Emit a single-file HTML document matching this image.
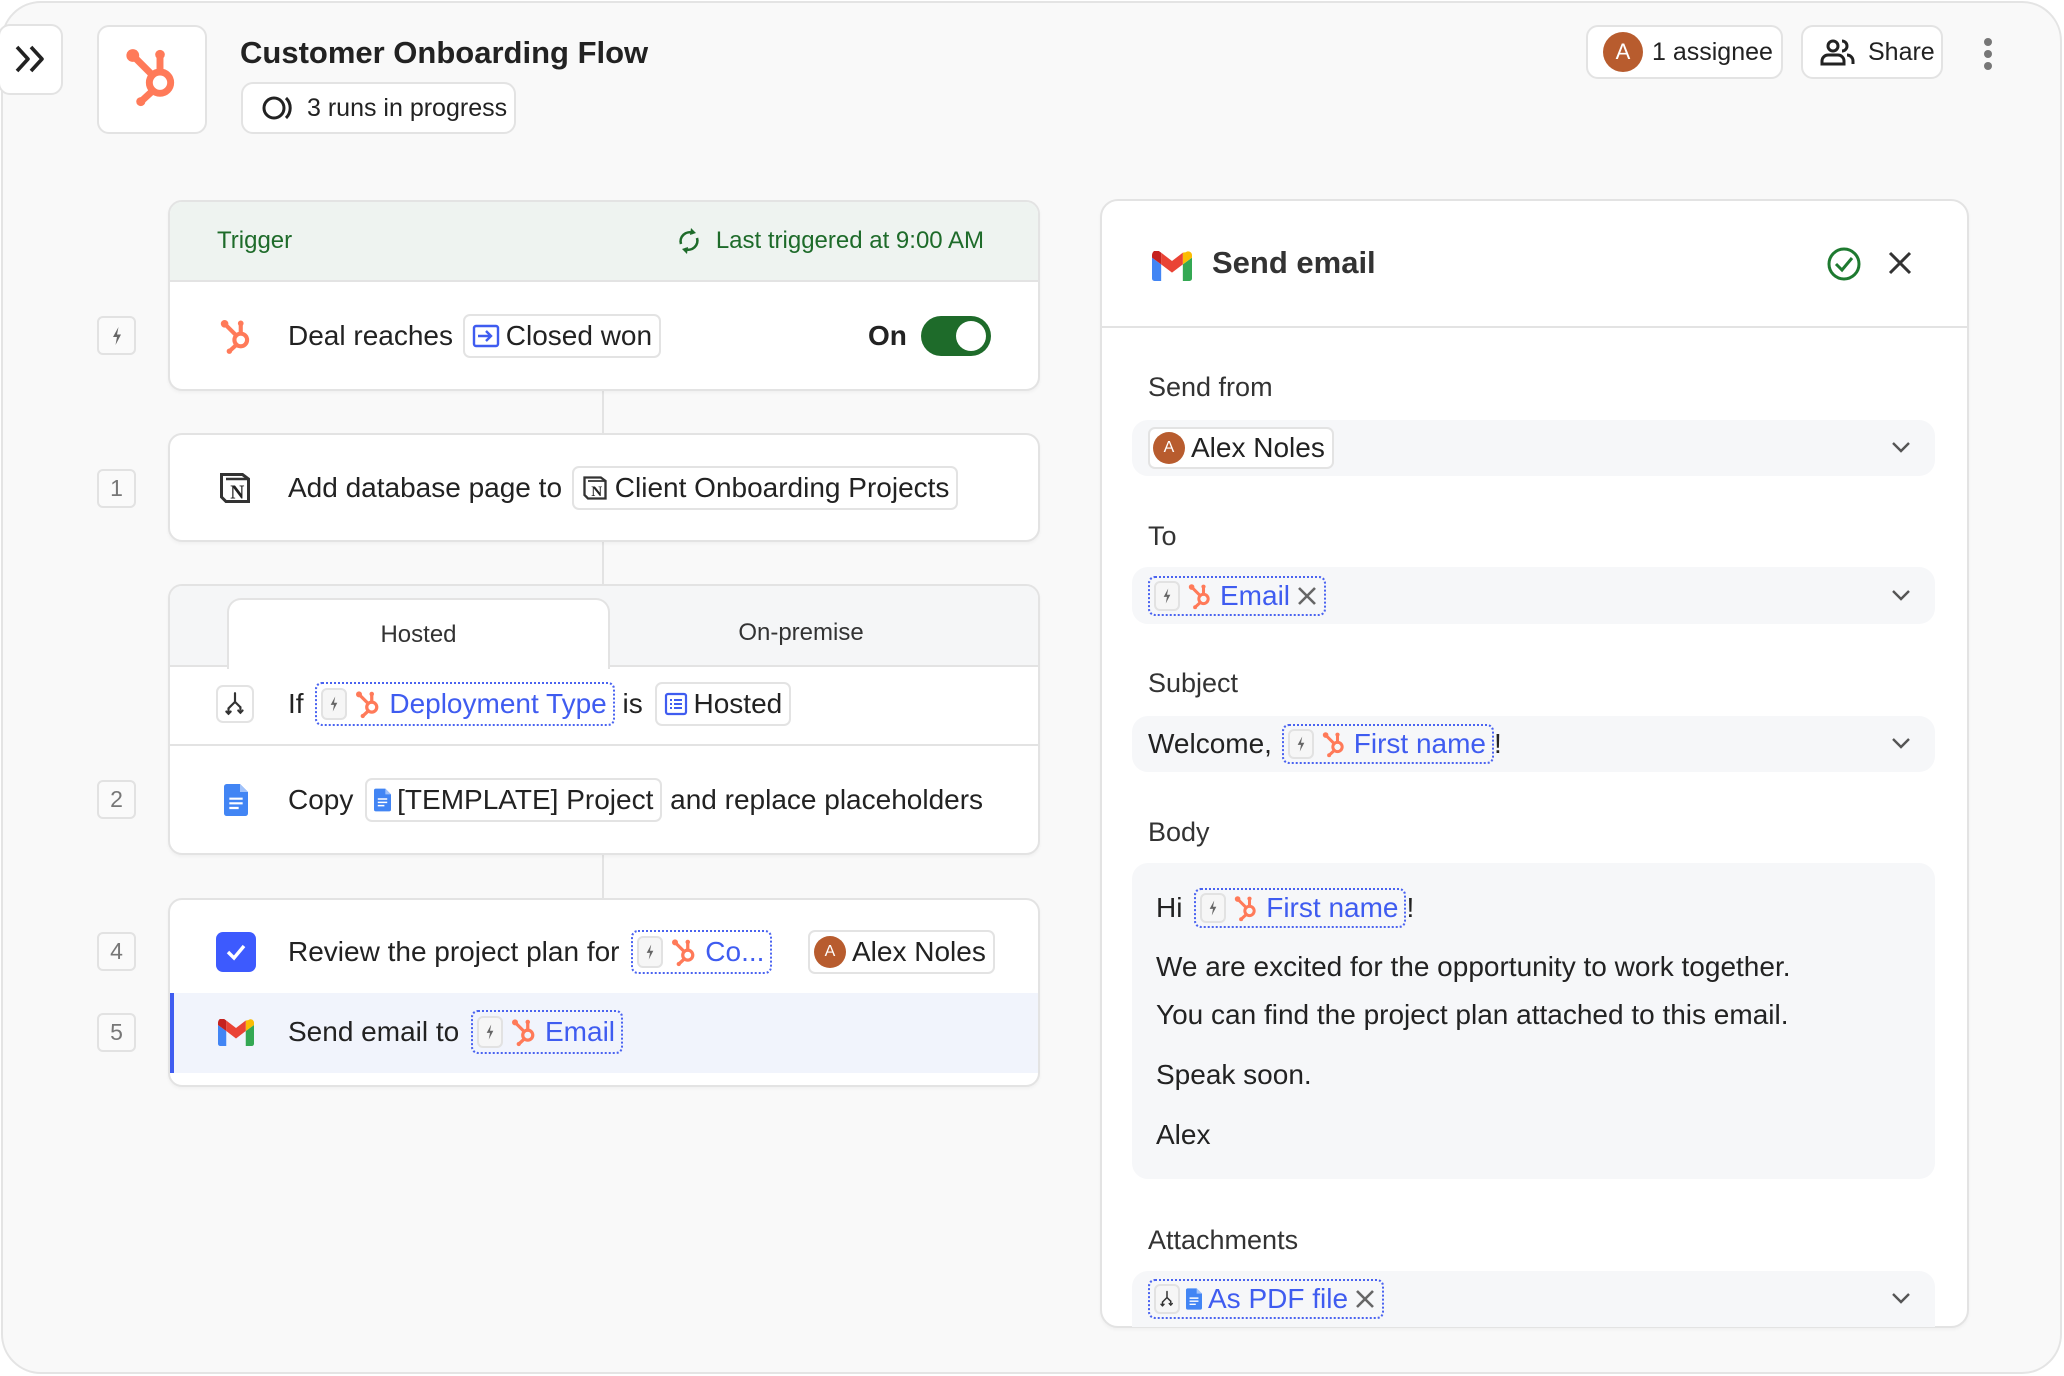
<!DOCTYPE html>
<html><head><meta charset="utf-8"><style>
*{box-sizing:border-box;margin:0;padding:0}
body{width:2064px;height:1376px;background:#fff;font-family:"Liberation Sans",sans-serif;color:#222;position:relative;overflow:hidden}
.frame{position:absolute;left:1px;top:1px;width:2061px;height:1373px;border:2px solid #e4e4e4;border-radius:40px;background:#f9f9f9}
.abs{position:absolute}
.row{position:absolute;display:flex;align-items:center;font-size:28px;white-space:nowrap}
.card{position:absolute;background:#fff;border:2px solid #e3e3e3;border-radius:14px;box-shadow:0 2px 3px rgba(0,0,0,.04)}
.num{position:absolute;left:97px;width:39px;height:39px;border:2px solid #e2e2e2;border-radius:6px;background:#fafafa;color:#777;font-size:23px;display:flex;align-items:center;justify-content:center}
.chip{display:inline-flex;align-items:center;gap:6px;border:2px solid #e3e3e3;border-radius:7px;padding:0 7px;height:44px;background:#fff}
.tok{display:inline-flex;align-items:center;gap:6px;border:2px dotted #4a63f0;border-radius:7px;padding:0 6px 0 4px;height:44px;color:#3f5cf0}
.bolt{display:inline-flex;align-items:center;justify-content:center;width:26px;height:32px;border:2px solid #e2e2e2;border-radius:6px;background:#f6f6f6}
.line{position:absolute;left:602px;width:2px;background:#e3e3e3}
.lbl{position:absolute;left:1148px;font-size:27px;color:#333}
.fld{position:absolute;left:1132px;width:803px;background:#f6f7f9;border-radius:16px;display:flex;align-items:center;padding:0 16px;font-size:28px;white-space:nowrap}
.chev{position:absolute;right:24px;top:50%;margin-top:-8px}
.btn{position:absolute;top:25px;height:54px;border:2px solid #e3e3e3;border-radius:12px;background:#fff;display:flex;align-items:center;font-size:25px;color:#222}
</style></head><body>
<svg width="0" height="0" style="position:absolute"><defs>
<symbol id="hs" viewBox="0 0 24 24"><g stroke="#ff7a59" stroke-width="2.6" fill="none" stroke-linecap="round"><circle cx="15" cy="14.5" r="4"/><line x1="12" y1="11.5" x2="6" y2="5.5"/><line x1="15" y1="10.5" x2="15" y2="5"/><line x1="12.3" y1="17.5" x2="8.5" y2="21"/></g><circle cx="4.8" cy="4.3" r="2.4" fill="#ff7a59"/><circle cx="15" cy="4" r="1.8" fill="#ff7a59"/><circle cx="7.8" cy="21.6" r="1.7" fill="#ff7a59"/></symbol>
<symbol id="bl" viewBox="0 0 12 20"><path d="M7.5 1 2 11h4l-1.5 8L10 8.5H6z" fill="#666"/></symbol>
<symbol id="gm" viewBox="0 0 48 36"><path d="M3 36h8V16L0 8v25a3 3 0 0 0 3 3z" fill="#4285f4"/><path d="M37 36h8a3 3 0 0 0 3-3V8l-11 8z" fill="#34a853"/><path d="M37 2v14l11-8V5c0-4-4.5-6-7.5-3.5z" fill="#fbbc04"/><path d="M11 16V2l13 10 13-10v14L24 26z" fill="#ea4335"/><path d="M0 5v3l11 8V2L7.5-.5C4.5-3 0 1 0 5z" fill="#c5221f"/></symbol>
<symbol id="doc" viewBox="0 0 18 24"><path d="M2 0h10l6 6v16a2 2 0 0 1-2 2H2a2 2 0 0 1-2-2V2a2 2 0 0 1 2-2z" fill="#4285f4"/><path d="M12 0v6h6z" fill="#a1c2fa"/><path d="M4 11h10M4 14.5h10M4 18h7" stroke="#fff" stroke-width="1.6"/></symbol>
<symbol id="br" viewBox="0 0 24 24"><g stroke="#333" stroke-width="2" fill="none" stroke-linecap="round"><path d="M12 2v8M12 10 6 16v5M12 10l5 5"/><path d="M4 19l2 2 2-2M15 18l2 2 2-2"/><path d="M17 15v5" stroke-dasharray="2 2"/></g></symbol>
<symbol id="cv" viewBox="0 0 20 12"><path d="M2 2l8 8 8-8" stroke="#555" stroke-width="2.4" fill="none"/></symbol>
<symbol id="nt" viewBox="0 0 24 24"><path d="M3 3h14l4 3v15H6l-3-3z" fill="#fff" stroke="#333" stroke-width="2"/><path d="M6 6h15" stroke="#333" stroke-width="1.6"/><text x="13.5" y="19" font-family="Liberation Serif" font-weight="bold" font-size="13" text-anchor="middle" fill="#222">N</text></symbol>
</defs></svg>
<div class="frame"></div>

<div class="abs" style="left:-2px;top:24px;width:65px;height:71px;border:2px solid #e3e3e3;border-radius:12px;background:#fff"></div>
<svg class="abs" style="left:14px;top:44px" width="34" height="30" viewBox="0 0 34 30"><path d="M3 3l11 12L3 27M17 3l11 12-11 12" stroke="#222" stroke-width="3.6" fill="none" stroke-linejoin="round"/></svg>
<div class="abs" style="left:97px;top:25px;width:110px;height:109px;border:2px solid #e3e3e3;border-radius:12px;background:#fff"></div>
<svg class="abs" style="left:120px;top:44px" width="64" height="64"><use href="#hs"/></svg>
<div class="abs" style="left:240px;top:35px;font-size:31px;font-weight:600;color:#222">Customer Onboarding Flow</div>
<div class="abs" style="left:241px;top:82px;width:275px;height:52px;border:2px solid #e3e3e3;border-radius:12px;background:#fff;display:flex;align-items:center;padding-left:18px;font-size:25px;color:#222">
<svg width="36" height="28" viewBox="0 0 36 28" style="margin-right:10px"><circle cx="13" cy="14" r="10" stroke="#222" stroke-width="3" fill="none"/><path d="M25 4a14 14 0 0 1 0 20" stroke="#222" stroke-width="3" fill="none"/></svg>3 runs in progress</div>
<div class="btn" style="left:1586px;width:197px;padding-left:15px"><span style="width:40px;height:40px;border-radius:50%;background:#b85c2e;color:#fff;display:flex;align-items:center;justify-content:center;font-size:22px;margin-right:9px">A</span>1 assignee</div>
<div class="btn" style="left:1801px;width:142px;padding-left:17px"><svg width="36" height="28" viewBox="0 0 36 28" style="margin-right:12px"><g stroke="#222" stroke-width="3" fill="none"><circle cx="13" cy="8" r="5"/><path d="M2 26v-3a6 6 0 0 1 6-6h10a6 6 0 0 1 6 6v3z"/><path d="M22 3a5 5 0 0 1 0 10M27 17a6 6 0 0 1 6 6v3"/></g></svg>Share</div>
<div class="abs" style="left:1984px;top:38px;width:10px"><div style="width:8px;height:8px;border-radius:50%;background:#777;margin-bottom:4px"></div><div style="width:8px;height:8px;border-radius:50%;background:#777;margin-bottom:4px"></div><div style="width:8px;height:8px;border-radius:50%;background:#777"></div></div>

<div class="line" style="top:390px;height:44px"></div>
<div class="line" style="top:541px;height:44px"></div>
<div class="line" style="top:854px;height:45px"></div>

<div class="card" style="left:168px;top:200px;width:872px;height:191px;overflow:hidden">
<div style="height:80px;background:#eef3f0;border-bottom:2px solid #e3e3e3;display:flex;align-items:center;padding:0 54px 0 47px;color:#1e6b2a;font-size:24px">
<span>Trigger</span><span style="margin-left:auto;display:flex;align-items:center"><svg width="26" height="30" viewBox="0 0 26 30" style="margin-right:14px"><g stroke="#1e6b2a" stroke-width="2.6" fill="none"><path d="M5 18a9 9 0 0 1 12-11"/><path d="M21 12a9 9 0 0 1-12 11"/></g><path d="M15 2l5 5-6 2z M11 28l-5-5 6-2z" fill="#1e6b2a"/></svg>Last triggered at 9:00 AM</span></div>
</div>
<div class="num" style="top:316px"><svg width="12" height="22"><use href="#bl"/></svg></div>
<div class="row" style="left:217px;top:314px;height:44px"><svg width="38" height="38" style="margin-right:33px"><use href="#hs"/></svg>Deal reaches&nbsp;<span class="chip" style="margin-left:2px"><svg width="28" height="24" viewBox="0 0 28 24"><rect x="2" y="2" width="24" height="20" rx="2" stroke="#3f5cf0" stroke-width="2.4" fill="none"/><path d="M6 12h12M14 7l5 5-5 5" stroke="#3f5cf0" stroke-width="2.4" fill="none"/></svg>Closed won</span></div>
<div class="row" style="left:868px;top:314px;height:44px;font-weight:600;color:#222">On</div>
<div class="abs" style="left:921px;top:316px;width:70px;height:40px;border-radius:20px;background:#1e6b2a"><div style="position:absolute;right:5px;top:5px;width:30px;height:30px;border-radius:50%;background:#fff"></div></div>

<div class="card" style="left:168px;top:433px;width:872px;height:109px"></div>
<div class="num" style="top:469px">1</div>
<div class="row" style="left:217px;top:466px;height:44px"><svg width="36" height="36" style="margin-right:35px"><use href="#nt"/></svg>Add database page to&nbsp;<span class="chip" style="margin-left:2px"><svg width="28" height="28"><use href="#nt"/></svg>Client Onboarding Projects</span></div>

<div class="card" style="left:168px;top:584px;width:872px;height:271px;overflow:hidden;background:#fff">
<div style="height:81px;background:#f5f6f7;border-bottom:2px solid #e3e3e3;position:relative">
<div style="position:absolute;left:57px;top:12px;width:383px;height:71px;background:#fff;border:2px solid #e3e3e3;border-bottom:none;border-radius:14px 14px 0 0;display:flex;align-items:center;justify-content:center;font-size:24px;color:#333">Hosted</div>
<div style="position:absolute;left:440px;top:12px;width:382px;height:69px;display:flex;align-items:center;justify-content:center;font-size:24px;color:#333">On-premise</div>
</div>
<div style="height:79px;border-bottom:2px solid #e3e3e3"></div>
</div>
<div class="row" style="left:216px;top:682px;height:44px"><span style="width:38px;height:38px;border:2px solid #e3e3e3;border-radius:7px;display:inline-flex;align-items:center;justify-content:center;margin-right:34px"><svg width="26" height="26"><use href="#br"/></svg></span>If&nbsp;<span class="tok" style="margin-left:4px"><span class="bolt"><svg width="10" height="18"><use href="#bl"/></svg></span><svg width="30" height="30"><use href="#hs"/></svg>Deployment Type</span>&nbsp;is&nbsp;<span class="chip" style="margin-left:4px"><svg width="24" height="24" viewBox="0 0 24 24"><rect x="2" y="2" width="20" height="20" rx="2" stroke="#3f5cf0" stroke-width="2.2" fill="none"/><path d="M6 8h2M10 8h8M6 12h2M10 12h8M6 16h2M10 16h8" stroke="#3f5cf0" stroke-width="2"/></svg>Hosted</span></div>
<div class="num" style="top:780px">2</div>
<div class="row" style="left:224px;top:777px;height:46px"><svg width="24" height="32" style="margin-right:40px"><use href="#doc"/></svg>Copy&nbsp;<span class="chip" style="margin-left:4px"><svg width="17" height="24"><use href="#doc"/></svg>[TEMPLATE] Project</span>&nbsp;and replace placeholders</div>

<div class="card" style="left:168px;top:898px;width:872px;height:189px;overflow:hidden">
<div style="position:absolute;left:0;top:93px;width:870px;height:80px;background:#f1f4fc;border-left:4px solid #3f5cf0"></div>
</div>
<div class="num" style="top:932px">4</div>
<div class="num" style="top:1013px">5</div>
<div class="row" style="left:216px;top:929px;height:46px"><span style="width:40px;height:40px;border-radius:7px;background:#3d5afe;display:inline-flex;align-items:center;justify-content:center;margin-right:32px"><svg width="22" height="18" viewBox="0 0 22 18"><path d="M3 9l6 6 10-12" stroke="#fff" stroke-width="3.4" fill="none"/></svg></span>Review the project plan for&nbsp;<span class="tok" style="margin-left:4px"><span class="bolt"><svg width="10" height="18"><use href="#bl"/></svg></span><svg width="30" height="30"><use href="#hs"/></svg>Co...</span></div>
<div class="row" style="left:808px;top:929px;height:46px"><span class="chip" style="padding-left:4px"><span style="width:32px;height:32px;border-radius:50%;background:#b85c2e;color:#fff;font-size:16px;display:inline-flex;align-items:center;justify-content:center">A</span>Alex Noles</span></div>
<div class="row" style="left:218px;top:1010px;height:44px"><svg width="36" height="27" style="margin-right:34px"><use href="#gm"/></svg>Send email to&nbsp;<span class="tok" style="margin-left:4px"><span class="bolt"><svg width="10" height="18"><use href="#bl"/></svg></span><svg width="30" height="30"><use href="#hs"/></svg>Email</span></div>

<div class="card" style="left:1100px;top:199px;width:869px;height:1129px;border-radius:18px;overflow:hidden">
<div style="height:127px;border-bottom:2px solid #e3e3e3"></div>
</div>
<svg class="abs" style="left:1152px;top:251px" width="40" height="30"><use href="#gm"/></svg>
<div class="abs" style="left:1212px;top:245px;font-size:31px;font-weight:600;color:#333">Send email</div>
<svg class="abs" style="left:1826px;top:246px" width="36" height="36" viewBox="0 0 36 36"><circle cx="18" cy="18" r="15" stroke="#1e7a30" stroke-width="3" fill="none"/><path d="M10 18l6 6 10-12" stroke="#1e7a30" stroke-width="3" fill="none"/></svg>
<svg class="abs" style="left:1887px;top:250px" width="26" height="26" viewBox="0 0 26 26"><path d="M3 3l20 20M23 3L3 23" stroke="#333" stroke-width="3"/></svg>

<div class="lbl" style="top:372px">Send from</div>
<div class="fld" style="top:420px;height:56px"><span class="chip" style="padding-left:3px;height:42px"><span style="width:32px;height:32px;border-radius:50%;background:#b85c2e;color:#fff;font-size:16px;display:inline-flex;align-items:center;justify-content:center">A</span>Alex Noles</span><svg class="chev" width="20" height="14"><use href="#cv"/></svg></div>
<div class="lbl" style="top:521px">To</div>
<div class="fld" style="top:567px;height:57px"><span class="tok" style="height:40px"><span class="bolt" style="height:30px"><svg width="10" height="18"><use href="#bl"/></svg></span><svg width="28" height="28"><use href="#hs"/></svg>Email<svg width="22" height="22" viewBox="0 0 22 22"><path d="M3 3l16 16M19 3L3 19" stroke="#666" stroke-width="2.6"/></svg></span><svg class="chev" width="20" height="14"><use href="#cv"/></svg></div>
<div class="lbl" style="top:668px">Subject</div>
<div class="fld" style="top:716px;height:56px">Welcome,&nbsp;<span class="tok" style="height:40px;margin-left:2px"><span class="bolt" style="height:30px"><svg width="10" height="18"><use href="#bl"/></svg></span><svg width="28" height="28"><use href="#hs"/></svg>First name</span>!<svg class="chev" width="20" height="14"><use href="#cv"/></svg></div>
<div class="lbl" style="top:817px">Body</div>
<div class="abs" style="left:1132px;top:863px;width:803px;height:316px;background:#f6f7f9;border-radius:16px;font-size:28px;color:#222">
<div style="position:absolute;left:24px;top:25px;display:flex;align-items:center;white-space:nowrap">Hi&nbsp;<span class="tok" style="height:40px;margin-left:4px"><span class="bolt" style="height:30px"><svg width="10" height="18"><use href="#bl"/></svg></span><svg width="28" height="28"><use href="#hs"/></svg>First name</span>!</div>
<div style="position:absolute;left:24px;top:88px">We are excited for the opportunity to work together.</div>
<div style="position:absolute;left:24px;top:136px">You can find the project plan attached to this email.</div>
<div style="position:absolute;left:24px;top:196px">Speak soon.</div>
<div style="position:absolute;left:24px;top:256px">Alex</div>
</div>
<div class="lbl" style="top:1225px">Attachments</div>
<div class="fld" style="top:1271px;height:56px;border-radius:16px 16px 0 0"><span class="tok" style="height:40px"><span class="bolt" style="height:30px"><svg width="18" height="18"><use href="#br"/></svg></span><svg width="16" height="24"><use href="#doc"/></svg>As PDF file<svg width="22" height="22" viewBox="0 0 22 22"><path d="M3 3l16 16M19 3L3 19" stroke="#666" stroke-width="2.6"/></svg></span><svg class="chev" width="20" height="14"><use href="#cv"/></svg></div>
</body></html>
